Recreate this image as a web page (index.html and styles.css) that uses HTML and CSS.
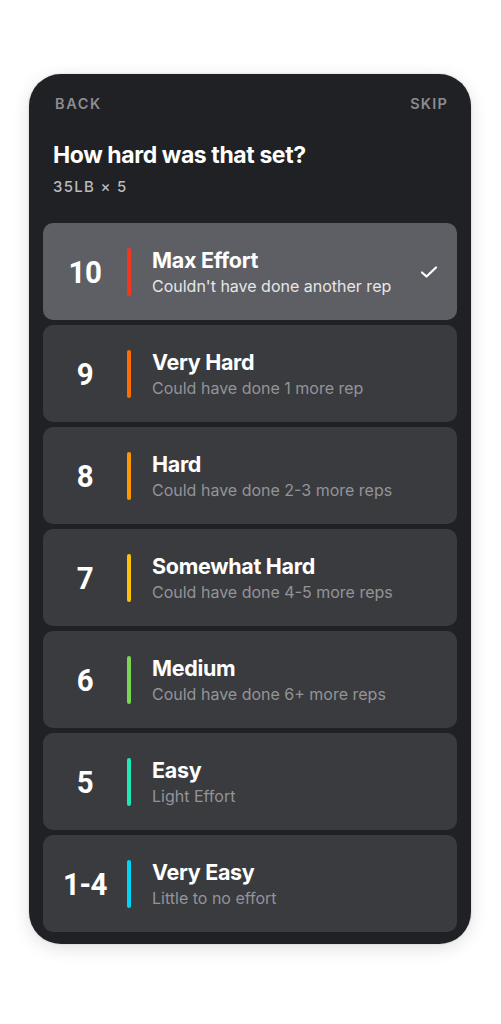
FILE: index.html
```html
<!DOCTYPE html>
<html>
<head>
<meta charset="utf-8">
<link rel="stylesheet" href="styles.css">
</head>
<body>
<div class="page">
  <div class="card">
    <div class="nav">
      <span class="nav-btn">BACK</span>
      <span class="nav-btn">SKIP</span>
    </div>
    <h1 class="title">How hard was that set?</h1>
    <div class="subtitle">35LB × 5</div>
    <div class="list">
      <div class="row selected">
        <div class="num">10</div>
        <div class="bar c10"></div>
        <div class="text">
          <div class="label">Max Effort</div>
          <div class="desc">Couldn't have done another rep</div>
        </div>
        <svg class="check" width="18" height="14" viewBox="0 0 18 14"><path d="M2 7.5 L6.5 11.5 L16 2.5" fill="none" stroke="#ffffff" stroke-width="2.2" stroke-linecap="round" stroke-linejoin="round"/></svg>
      </div>
      <div class="row">
        <div class="num">9</div>
        <div class="bar c9"></div>
        <div class="text">
          <div class="label">Very Hard</div>
          <div class="desc">Could have done 1 more rep</div>
        </div>
      </div>
      <div class="row">
        <div class="num">8</div>
        <div class="bar c8"></div>
        <div class="text">
          <div class="label">Hard</div>
          <div class="desc">Could have done 2-3 more reps</div>
        </div>
      </div>
      <div class="row">
        <div class="num">7</div>
        <div class="bar c7"></div>
        <div class="text">
          <div class="label">Somewhat Hard</div>
          <div class="desc">Could have done 4-5 more reps</div>
        </div>
      </div>
      <div class="row">
        <div class="num">6</div>
        <div class="bar c6"></div>
        <div class="text">
          <div class="label">Medium</div>
          <div class="desc">Could have done 6+ more reps</div>
        </div>
      </div>
      <div class="row">
        <div class="num">5</div>
        <div class="bar c5"></div>
        <div class="text">
          <div class="label">Easy</div>
          <div class="desc">Light Effort</div>
        </div>
      </div>
      <div class="row">
        <div class="num">1-4</div>
        <div class="bar c4"></div>
        <div class="text">
          <div class="label">Very Easy</div>
          <div class="desc">Little to no effort</div>
        </div>
      </div>
    </div>
  </div>
</div>
</body>
</html>
```

FILE: styles.css
```css
* { box-sizing: border-box; }
html, body { margin: 0; padding: 0; background: #ffffff; }
body { font-family: Inter, "Noto Sans", sans-serif; width: 501px; height: 1024px; overflow: hidden; }
.page { padding: 74px 30px 0 29px; }
.card {
  width: 442px;
  height: 870px;
  background: #202124;
  border-radius: 32px;
  box-shadow: 0 4px 18px rgba(0,0,0,0.12), 0 0 2px rgba(0,0,0,0.2);
  padding: 0 14px 12px 14px;
  display: flex;
  flex-direction: column;
}
.nav {
  display: flex;
  justify-content: space-between;
  padding: 21px 10px 0 12px;
  height: 40px;
}
.nav-btn {
  color: #8b8c90;
  font-size: 14.5px;
  font-weight: 600;
  letter-spacing: 1.6px;
  line-height: 18px;
}
.nav-btn:last-child { letter-spacing: 1.2px; margin-right: -1px; }
.title {
  margin: 28px 0 0 10px;
  color: #ffffff;
  font-size: 23px;
  font-weight: 700;
  letter-spacing: -0.4px;
  line-height: 26px;
}
.subtitle {
  margin: 10px 0 0 10px;
  color: #b9babd;
  font-size: 15px;
  font-weight: 500;
  letter-spacing: 1.3px;
  line-height: 18px;
}
.list {
  margin-top: 27px;
  display: flex;
  flex-direction: column;
  gap: 5px;
}
.row {
  height: 97px;
  background: #3a3b3f;
  border-radius: 10px;
  display: flex;
  align-items: center;
  position: relative;
}
.row.selected { background: #5e5f64; }
.num {
  width: 84px;
  text-align: center;
  color: #ffffff;
  font-family: Roboto, "Liberation Sans", sans-serif;
  font-weight: 700;
  font-size: 32px;
  letter-spacing: -0.5px;
  transform: scaleX(0.92);
}
.bar {
  width: 4px;
  height: 48px;
  border-radius: 2px;
  margin-right: 21px;
}
.c10 { background: #f3361e; }
.c9 { background: #ff6d00; }
.c8 { background: #ff9800; }
.c7 { background: #ffc107; }
.c6 { background: #79d653; }
.c5 { background: #1de9b6; }
.c4 { background: #00d4f5; }
.text { flex: 1; }
.label {
  color: #ffffff;
  font-size: 21.5px;
  font-weight: 700;
  letter-spacing: -0.3px;
  line-height: 26px;
}
.desc {
  color: #939498;
  font-size: 16px;
  font-weight: 400;
  line-height: 20px;
  margin-top: 3px;
}
.selected .desc { color: #e6e6e8; }
.check { margin-right: 19px; }
```
